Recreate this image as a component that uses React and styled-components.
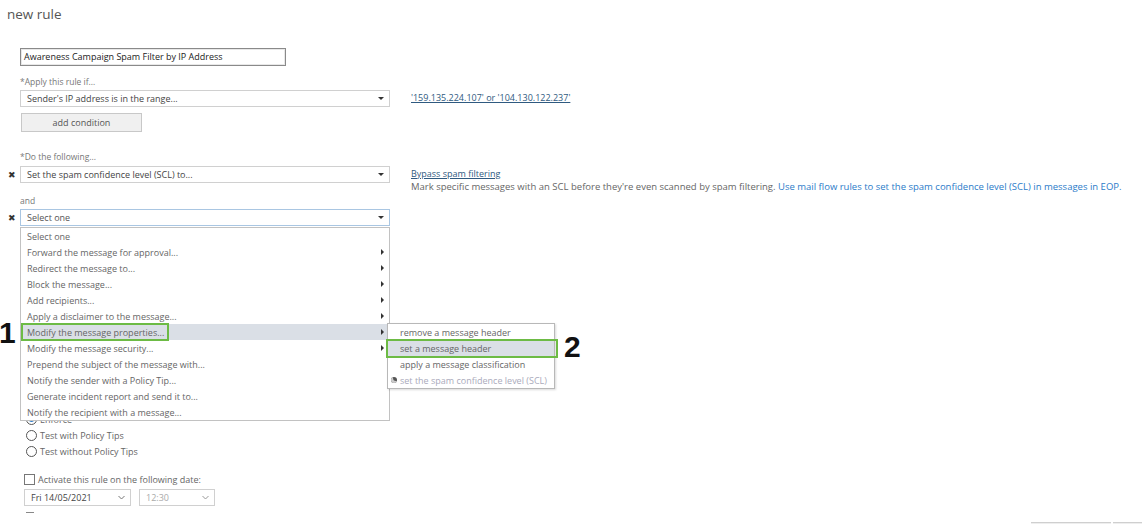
import React from 'react';
import styled, { createGlobalStyle } from 'styled-components';

const GlobalStyle = createGlobalStyle`
  html, body {
    margin: 0;
    padding: 0;
    background: #fff;
    overflow: hidden;
  }
  body {
    font-family: "Open Sans", "Noto Sans", sans-serif;
    color: #444;
  }
`;

const Page = styled.div`
  width: 1142px;
  height: 524px;
  display: flex;
  flex-direction: column;
  overflow: hidden;
`;

const Main = styled.div`
  height: 522px;
  flex-shrink: 0;
  overflow: hidden;
`;

const Title = styled.h1`
  margin: 0;
  padding-left: 7px;
  height: 28px;
  line-height: 28px;
  font-size: 13.5px;
  font-weight: 400;
  color: #555;
`;

const Form = styled.div`
  padding-left: 20px;
  display: flex;
  flex-direction: column;
  align-items: flex-start;
  font-size: 9px;
`;

const TextInput = styled.div`
  margin-top: 20px;
  width: 258px;
  height: 14px;
  padding: 1px 3px;
  border: 1px solid #8a8a8a;
  box-shadow: inset 0 0 0 1px #e8e8e8;
  color: #222;
  line-height: 14px;
  font-size: 9px;
`;

const Label = styled.div`
  margin-top: ${p => p.$mt || 18}px;
  height: 14px;
  line-height: 14px;
  font-size: 8.5px;
  color: #777;
`;

const Row = styled.div`
  margin-top: ${p => p.$mt || 0}px;
  margin-left: -20px;
  height: 17px;
  display: flex;
  align-items: flex-start;
`;

const XCol = styled.div`
  width: 20px;
  height: 17px;
  display: flex;
  align-items: center;
  padding-left: 8px;
  box-sizing: border-box;
  font-family: "DejaVu Sans", sans-serif;
  font-size: 9px;
  font-weight: bold;
  color: #333;
`;

const SelectWrap = styled.div`
  position: relative;
  width: ${p => p.$w || 370}px;
`;

const Select = styled.div`
  box-sizing: border-box;
  height: 17px;
  border: 1px solid ${p => (p.$focus ? '#a9c6e2' : '#d0d0d0')};
  display: flex;
  align-items: center;
  justify-content: space-between;
  padding: 0 5px 0 6px;
  color: ${p => (p.$disabled ? '#aaa' : p.$focus ? '#555' : '#444')};
  font-size: 9px;
  background: #fff;
`;

const DownArrow = styled.span`
  width: 0;
  height: 0;
  border-left: 3px solid transparent;
  border-right: 3px solid transparent;
  border-top: 3px solid #333;
`;

const Side = styled.div`
  margin-left: 21px;
  padding-top: 1px;
  font-size: 9.5px;
  line-height: 13px;
  color: #666;
  white-space: nowrap;
`;

const DarkLink = styled.a`
  color: #2f5a80;
  text-decoration: underline;
  font-size: ${p => p.$size || 9.5}px;
  cursor: pointer;
`;

const BlueLink = styled.a`
  color: #2b7bc9;
  cursor: pointer;
`;

const Button = styled.div`
  margin-top: 6px;
  box-sizing: border-box;
  width: 121px;
  height: 19px;
  margin-left: 1px;
  border: 1px solid #c8c8c8;
  background: #f0f0f0;
  display: flex;
  align-items: center;
  justify-content: center;
  color: #555;
  font-size: 9px;
`;

const Menu = styled.div`
  position: absolute;
  top: 100%;
  left: 0;
  width: 100%;
  box-sizing: border-box;
  margin-top: 1px;
  background: #fff;
  border: 1px solid #c2c2c2;
  z-index: 5;
`;

const MenuItem = styled.div`
  position: relative;
  height: 16px;
  display: flex;
  align-items: center;
  justify-content: space-between;
  padding: 0 5px 0 6px;
  color: ${p => (p.$disabled ? '#aab' : '#666')};
  background: ${p => (p.$active ? '#dadfe6' : 'transparent')};
  font-size: 9px;
  white-space: nowrap;
`;

const RightArrow = styled.span`
  width: 0;
  height: 0;
  border-top: 3px solid transparent;
  border-bottom: 3px solid transparent;
  border-left: 3px solid #333;
`;

const SubMenu = styled.div`
  position: absolute;
  top: -1px;
  left: 366px;
  width: 168px;
  box-sizing: border-box;
  background: #fff;
  border: 1px solid #b8b8b8;
  box-shadow: 1px 1px 2px rgba(0, 0, 0, 0.15);
  z-index: 6;
`;

const SubItem = styled(MenuItem)`
  padding-left: 12px;
  justify-content: flex-start;
`;

const BusyIcon = styled.span`
  position: absolute;
  left: 3px;
  top: 5px;
  width: 6px;
  height: 6px;
  border-radius: 50%;
  background: #555;
  box-shadow: inset 2px -2px 0 #ccc;
`;

const Highlight = styled.div`
  position: absolute;
  border: 2px solid #6dbb45;
  box-sizing: border-box;
  pointer-events: none;
  z-index: 7;
`;

const Marker = styled.div`
  position: absolute;
  font-family: "Liberation Sans", Arial, sans-serif;
  font-weight: bold;
  font-size: 30px;
  line-height: 30px;
  color: #111;
  z-index: 7;
`;

const MenuSpace = styled.div`
  height: 185px;
`;

const Check = styled.span`
  display: inline-block;
  width: 9px;
  height: 9px;
  border: 1px solid #777;
  background: #fff;
  margin-right: 3px;
  flex-shrink: 0;
`;

const Radio = styled.span`
  position: relative;
  display: inline-block;
  width: 9px;
  height: 9px;
  border: 1px solid #555;
  border-radius: 50%;
  margin-right: 3px;
  flex-shrink: 0;
  background: #fff;
  &::after {
    content: '';
    display: ${p => (p.$on ? 'block' : 'none')};
    position: absolute;
    inset: 2px;
    border-radius: 50%;
    background: #2b7bc9;
  }
`;

const OptionRow = styled.div`
  margin-top: ${p => p.$mt || 0}px;
  margin-left: ${p => p.$ml || 6}px;
  height: 16px;
  display: flex;
  align-items: center;
  font-size: 9px;
  color: #666;
`;

const DateRow = styled.div`
  margin-top: 2px;
  margin-left: 4px;
  display: flex;
  gap: 8px;
`;

const Chevron = styled.svg`
  width: 7px;
  height: 5px;
`;

const Dash = styled.div`
  margin-top: 6px;
  margin-left: 6px;
  width: 8px;
  height: 1px;
  background: #888;
`;

const Footer = styled.div`
  height: 2px;
  display: flex;
  gap: 2px;
  padding-left: 1031px;
  overflow: hidden;
`;

const FooterButton = styled.div`
  width: 80px;
  flex-shrink: 0;
  height: 20px;
  border-top: 1px solid #cfcfcf;
  background: #eeeeee;
`;

const actions = [
  ['Select one', false],
  ['Forward the message for approval...', true],
  ['Redirect the message to...', true],
  ['Block the message...', true],
  ['Add recipients...', true],
  ['Apply a disclaimer to the message...', true],
  ['Modify the message properties...', true],
  ['Modify the message security...', true],
  ['Prepend the subject of the message with...', false],
  ['Notify the sender with a Policy Tip...', false],
  ['Generate incident report and send it to...', false],
  ['Notify the recipient with a message...', false],
];

const ChevronDown = ({ color = '#777' }) => (
  <Chevron viewBox="0 0 7 5">
    <path d="M0.5 1 L3.5 4 L6.5 1" fill="none" stroke={color} strokeWidth="1" />
  </Chevron>
);

const App = () => {
  return (
    <Page>
      <GlobalStyle />
      <Main>
        <Title>new rule</Title>
        <Form>
          <TextInput>Awareness Campaign Spam Filter by IP Address</TextInput>

          <Label $mt={9}>*Apply this rule if...</Label>
          <Row $mt={1}>
            <XCol />
            <SelectWrap>
              <Select>
                Sender's IP address is in the range...
                <DownArrow />
              </Select>
            </SelectWrap>
            <Side>
              <DarkLink $size={9}>'159.135.224.107' or '104.130.122.237'</DarkLink>
            </Side>
          </Row>
          <Button>add condition</Button>

          <Label $mt={18}>*Do the following...</Label>
          <Row $mt={2}>
            <XCol>✖</XCol>
            <SelectWrap>
              <Select>
                Set the spam confidence level (SCL) to...
                <DownArrow />
              </Select>
            </SelectWrap>
            <Side>
              <DarkLink $size={9}>Bypass spam filtering</DarkLink>
              <br />
              Mark specific messages with an SCL before they're even scanned by spam filtering.{' '}
              <BlueLink>Use mail flow rules to set the spam confidence level (SCL) in messages in EOP.</BlueLink>
            </Side>
          </Row>

          <Label $mt={11}>and</Label>
          <Row $mt={1}>
            <XCol>✖</XCol>
            <SelectWrap>
              <Select $focus>
                Select one
                <DownArrow />
              </Select>
              <Menu>
                {actions.map(([text, sub]) => {
                  const active = text === 'Modify the message properties...';
                  return (
                    <MenuItem key={text} $active={active}>
                      {text}
                      {sub && <RightArrow />}
                      {active && (
                        <SubMenu>
                          <SubItem>remove a message header</SubItem>
                          <SubItem $active>set a message header</SubItem>
                          <SubItem>apply a message classification</SubItem>
                          <SubItem $disabled>
                            <BusyIcon />
                            set the spam confidence level (SCL)
                          </SubItem>
                        </SubMenu>
                      )}
                    </MenuItem>
                  );
                })}
                <Highlight style={{ left: 0, top: 95, width: 148, height: 18 }} />
                <Highlight style={{ left: 365, top: 111, width: 172, height: 19 }} />
              </Menu>
              <Marker style={{ left: -21, top: 109 }}>1</Marker>
              <Marker style={{ left: 544, top: 123 }}>2</Marker>
            </SelectWrap>
          </Row>

          <MenuSpace />

          <OptionRow>
            <Radio $on />
            Enforce
          </OptionRow>
          <OptionRow>
            <Radio />
            Test with Policy Tips
          </OptionRow>
          <OptionRow>
            <Radio />
            Test without Policy Tips
          </OptionRow>

          <OptionRow $mt={12} $ml={4}>
            <Check />
            Activate this rule on the following date:
          </OptionRow>
          <DateRow>
            <SelectWrap $w={107}>
              <Select>
                Fri 14/05/2021
                <ChevronDown />
              </Select>
            </SelectWrap>
            <SelectWrap $w={76}>
              <Select $disabled>
                12:30
                <ChevronDown color="#999" />
              </Select>
            </SelectWrap>
          </DateRow>
          <Dash />
        </Form>
      </Main>
      <Footer>
        <FooterButton />
        <FooterButton />
      </Footer>
    </Page>
  );
};

export default App;
